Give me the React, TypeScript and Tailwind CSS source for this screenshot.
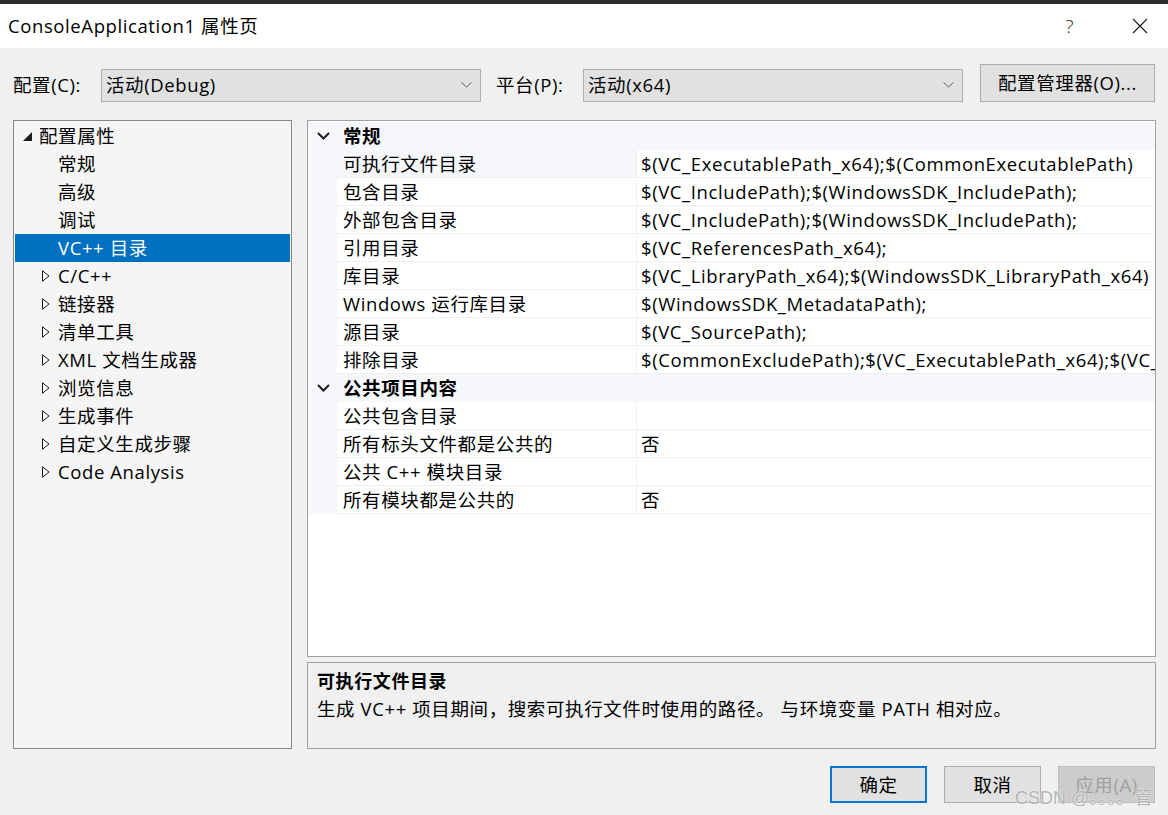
import React from 'react';

const FONT = { fontFamily: '"Segoe UI", "Open Sans", "Noto Sans CJK SC", sans-serif' };

const treeItems: { label: string; kind: 'leaf' | 'closed'; selected?: boolean }[] = [
  { label: '常规', kind: 'leaf' },
  { label: '高级', kind: 'leaf' },
  { label: '调试', kind: 'leaf' },
  { label: 'VC++ 目录', kind: 'leaf', selected: true },
  { label: 'C/C++', kind: 'closed' },
  { label: '链接器', kind: 'closed' },
  { label: '清单工具', kind: 'closed' },
  { label: 'XML 文档生成器', kind: 'closed' },
  { label: '浏览信息', kind: 'closed' },
  { label: '生成事件', kind: 'closed' },
  { label: '自定义生成步骤', kind: 'closed' },
  { label: 'Code Analysis', kind: 'closed' },
];

const general: [string, string][] = [
  ['可执行文件目录', '$(VC_ExecutablePath_x64);$(CommonExecutablePath)'],
  ['包含目录', '$(VC_IncludePath);$(WindowsSDK_IncludePath);'],
  ['外部包含目录', '$(VC_IncludePath);$(WindowsSDK_IncludePath);'],
  ['引用目录', '$(VC_ReferencesPath_x64);'],
  ['库目录', '$(VC_LibraryPath_x64);$(WindowsSDK_LibraryPath_x64)'],
  ['Windows 运行库目录', '$(WindowsSDK_MetadataPath);'],
  ['源目录', '$(VC_SourcePath);'],
  ['排除目录', '$(CommonExcludePath);$(VC_ExecutablePath_x64);$(VC_LibraryPath_x64)'],
];

const publicItems: [string, string][] = [
  ['公共包含目录', ''],
  ['所有标头文件都是公共的', '否'],
  ['公共 C++ 模块目录', ''],
  ['所有模块都是公共的', '否'],
];

function SelectChevron() {
  return (
    <svg width="11" height="6" viewBox="0 0 11 6" className="shrink-0">
      <polyline points="0.5,0.5 5.5,5 10.5,0.5" fill="none" stroke="#606060" strokeWidth="1" />
    </svg>
  );
}

function Select({ value, width }: { value: string; width: string }) {
  return (
    <div className={`${width} h-[33px] bg-[#e1e1e1] border border-[#adadad] flex items-center justify-between pl-[4px] pr-[8px]`}>
      <span className="text-[18.5px] text-black">{value}</span>
      <SelectChevron />
    </div>
  );
}

function CategoryRow({ label }: { label: string }) {
  return (
    <div className="h-[28px] flex items-center bg-[#f5f7fa]">
      <div className="w-[29px] flex justify-center pl-[2px]">
        <svg width="13" height="8" viewBox="0 0 13 8">
          <polyline points="1,1 6.5,6.5 12,1" fill="none" stroke="#1e1e1e" strokeWidth="2" />
        </svg>
      </div>
      <span className="pl-[6px] text-[18.5px] font-bold text-black">{label}</span>
    </div>
  );
}

function PropRow({ name, value, selected }: { name: string; value: string; selected?: boolean }) {
  return (
    <div className="h-[28px] flex">
      <div className="w-[29px] shrink-0 bg-[#f5f7fa]" />
      <div className={`w-[300px] shrink-0 flex items-center pl-[6px] border-b border-r border-[#f0f0f0] ${selected ? 'bg-[#f5f7fa]' : 'bg-white'}`}>
        <span className="text-[18.5px] text-black whitespace-nowrap">{name}</span>
      </div>
      <div className="flex-1 min-w-0 flex items-center pl-[4px] border-b border-[#f0f0f0] bg-white overflow-hidden">
        <span className="text-[18.5px] text-black whitespace-nowrap">{value}</span>
      </div>
    </div>
  );
}

export default function App() {
  return (
    <div className="w-[1168px] h-[815px] bg-[#f0f0f0] overflow-hidden relative flex flex-col tracking-[0.6px]" style={FONT}>
      {/* strip of the window behind */}
      <div className="h-[4px] bg-[#2d2d30] shrink-0" />

      {/* title bar */}
      <div className="h-[44px] bg-white flex items-center justify-between pl-[8px] pr-[20px] shrink-0">
        <span className="text-[18.5px] text-black">ConsoleApplication1 属性页</span>
        <div className="flex items-center gap-[58px]">
          <span className="text-[19px] text-[#1e1e1e] font-light">?</span>
          <svg width="16" height="16" viewBox="0 0 16 16">
            <path d="M1 1 L15 15 M15 1 L1 15" stroke="#1e1e1e" strokeWidth="1.2" />
          </svg>
        </div>
      </div>

      {/* configuration row */}
      <div className="h-[38px] mt-[18px] flex items-center pl-[13px] shrink-0">
        <span className="w-[88px] text-[18.5px] text-black">配置(C):</span>
        <Select value="活动(Debug)" width="w-[380px]" />
        <span className="w-[102px] pl-[15px] text-[18.5px] text-black">平台(P):</span>
        <Select value="活动(x64)" width="w-[380px]" />
        <div className="ml-[17px] mb-[4px] w-[175px] h-[38px] bg-[#e1e1e1] border border-[#adadad] flex items-center justify-center">
          <span className="text-[18.5px] text-black">配置管理器(O)...</span>
        </div>
      </div>

      {/* main area */}
      <div className="mt-[16px] flex pl-[13px] h-[629px] shrink-0">
        {/* tree */}
        <div className="w-[279px] h-full border border-[#828790] bg-[#f5f5f5] pt-[1px] px-[1px]">
          <div className="h-[28px] flex items-center">
            <div className="w-[24px] flex justify-end pr-[7px]">
              <svg width="9" height="9" viewBox="0 0 9 9">
                <polygon points="9,0 9,9 0,9" fill="#1e1e1e" />
              </svg>
            </div>
            <span className="text-[18.5px] text-black">配置属性</span>
          </div>
          {treeItems.map((it) => (
            <div key={it.label} className={`h-[28px] flex items-center ${it.selected ? 'bg-[#0071c1]' : ''}`}>
              <div className="w-[43px] flex justify-end pr-[8px]">
                {it.kind === 'closed' && (
                  <svg width="8" height="12" viewBox="0 0 8 12">
                    <polygon points="0.5,0.8 7,6 0.5,11.2" fill="none" stroke="#1e1e1e" strokeWidth="1" />
                  </svg>
                )}
              </div>
              <span className={`text-[18.5px] ${it.selected ? 'text-white' : 'text-black'}`}>{it.label}</span>
            </div>
          ))}
        </div>

        {/* right column */}
        <div className="ml-[15px] w-[849px] h-full flex flex-col">
          <div className="h-[537px] border border-[#a0a0a0] bg-white pt-[1px] overflow-hidden">
            <CategoryRow label="常规" />
            {general.map(([n, v], i) => (
              <PropRow key={n} name={n} value={v} selected={i === 0} />
            ))}
            <CategoryRow label="公共项目内容" />
            {publicItems.map(([n, v]) => (
              <PropRow key={n} name={n} value={v} />
            ))}
          </div>
          <div className="mt-[5px] flex-1 border border-[#a0a0a0] bg-[#f0f0f0] px-[9px] pt-[4px]">
            <div className="h-[28px] flex items-center text-[18px] font-bold text-black">可执行文件目录</div>
            <div className="h-[28px] flex items-center text-[18.5px] text-black">
              生成 VC++ 项目期间，搜索可执行文件时使用的路径。 与环境变量 PATH 相对应。
            </div>
          </div>
        </div>
      </div>

      {/* buttons */}
      <div className="mt-[17px] flex justify-end pr-[13px] gap-[17px] shrink-0">
        <div className="w-[97px] h-[37px] bg-[#e1e1e1] border-2 border-[#0078d7] flex items-center justify-center text-[18.5px] text-black">
          确定
        </div>
        <div className="w-[97px] h-[37px] bg-[#e1e1e1] border border-[#adadad] flex items-center justify-center text-[18.5px] text-black">
          取消
        </div>
        <div className="w-[97px] h-[37px] bg-[#cccccc] border border-[#bfbfbf] flex items-center justify-center text-[18.5px] text-[#a0a0a0]">
          应用(A)
        </div>
      </div>

      {/* watermark */}
      <div
        className="absolute left-[1015px] top-[785px] text-[18px] tracking-normal text-[#b4b4b4] whitespace-nowrap"
        style={{ fontFamily: '"Liberation Sans", "Noto Sans CJK SC", sans-serif', textShadow: '0 0 2px #ffffff' }}
      >
        CSDN @。。。。管
      </div>
    </div>
  );
}
